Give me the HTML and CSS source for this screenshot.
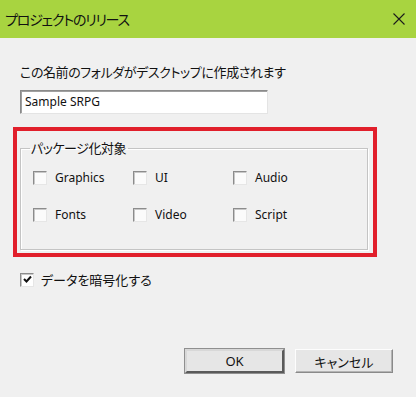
FILE: index.html
```html
<!DOCTYPE html>
<html lang="ja">
<head>
    <meta charset="UTF-8">
    <title>プロジェクトのリリース</title>
    <link rel="stylesheet" href="styles.css">
</head>
<body>
    <div class="window">
        <div class="title-bar">
            <span class="title">プロジェクトのリリース</span>
            <svg class="close" width="12" height="12" viewBox="0 0 12 12">
                <path d="M0.5 0.5 L11.5 11.5 M11.5 0.5 L0.5 11.5" stroke="#1c1c1c" stroke-width="1.1" fill="none"/>
            </svg>
        </div>

        <div class="content">
            <div class="label">この名前のフォルダがデスクトップに作成されます</div>
            <div class="text-box">Sample SRPG</div>

            <div class="highlight">
                <fieldset class="group">
                    <legend>パッケージ化対象</legend>
                    <div class="check-grid">
                        <div class="check"><span class="box"></span>Graphics</div>
                        <div class="check"><span class="box"></span>UI</div>
                        <div class="check"><span class="box"></span>Audio</div>
                        <div class="check"><span class="box"></span>Fonts</div>
                        <div class="check"><span class="box"></span>Video</div>
                        <div class="check"><span class="box"></span>Script</div>
                    </div>
                </fieldset>
            </div>

            <div class="check encrypt">
                <span class="box checked">
                    <svg width="9" height="9" viewBox="0 0 9 9">
                        <path d="M1 4 L3.5 6.5 L8 1.5" stroke="#111" stroke-width="2" fill="none"/>
                    </svg>
                </span>データを暗号化する
            </div>

            <div class="buttons">
                <button class="btn default">OK</button>
                <button class="btn">キャンセル</button>
            </div>
        </div>
    </div>
</body>
</html>
```

FILE: styles.css
```css
* {
    margin: 0;
    padding: 0;
    box-sizing: border-box;
}

body {
    background-color: #f0f0f0;
    font-family: 'Noto Sans', 'Noto Sans CJK JP', sans-serif;
    font-size: 12px;
    color: #111;
    font-feature-settings: "palt";
}

.window {
    width: 416px;
    height: 397px;
    background-color: #f0f0f0;
}

.title-bar {
    height: 38px;
    background-color: #a8d440;
    display: flex;
    align-items: center;
    justify-content: space-between;
    padding: 0 11px 0 5px;
}

.title {
    font-size: 14px;
    letter-spacing: -1.2px;
    color: #111;
}

.content {
    padding: 26px 23px 0 20px;
}

.label {
    font-size: 13px;
    line-height: 16px;
    letter-spacing: -0.4px;
}

.text-box {
    margin-top: 10px;
    width: 248px;
    height: 24px;
    background-color: #fff;
    border: 1px solid;
    border-color: #8a8a8a #e4e4e4 #e4e4e4 #8a8a8a;
    box-shadow: inset 1px 1px 0 #a0a0a0;
    padding: 2px 4px;
    font-size: 12px;
    line-height: 18px;
}

.highlight {
    margin: 13px 0 0 -7px;
    width: 364px;
    border: 4px solid #e11f2b;
    padding: 9px 5px 3px 3px;
}

.group {
    border: 1px solid #c4c4c4;
    box-shadow: 1px 1px 0 #fff, inset 1px 1px 0 #fff;
    padding: 14px 0 26px 12px;
    height: 110px;
}

.group legend {
    font-size: 13px;
    line-height: 16px;
    margin-left: -3px;
    padding: 0 2px 0 1px;
    letter-spacing: -0.5px;
}

.check-grid {
    display: grid;
    grid-template-columns: 100px 100px 100px;
    row-gap: 22px;
}

.check {
    display: flex;
    align-items: center;
    height: 15px;
    font-size: 12px;
}

.box {
    width: 14px;
    height: 14px;
    margin-right: 8px;
    background-color: #fbfbfb;
    border: 1px solid;
    border-color: #8c8c8c #e6e6e6 #e6e6e6 #8c8c8c;
    box-shadow: inset 1px 1px 0 #c8c8c8;
    display: flex;
    align-items: center;
    justify-content: center;
}

.encrypt {
    margin-top: 15px;
    font-size: 13px;
}

.box.checked {
    background-color: #fff;
    margin-right: 7px;
}

.buttons {
    margin-top: 62px;
    display: flex;
    justify-content: flex-end;
    gap: 11px;
}

.btn {
    width: 98px;
    height: 24px;
    font-family: 'Noto Sans', 'Noto Sans CJK JP', sans-serif;
    font-size: 13px;
    font-feature-settings: "palt";
    color: #111;
    background-color: #e6e6e6;
    border: 1px solid;
    border-color: #fdfdfd #8a8a8a #8a8a8a #fdfdfd;
    box-shadow: inset -1px -1px 0 #b4b4b4;
}

.btn.default {
    width: 99px;
    border: 2px solid #6b6b6b;
    border-color: #d8d8d8 #5a5a5a #5a5a5a #d8d8d8;
    box-shadow: 0 0 0 1px #8f8f8f;
}
```
